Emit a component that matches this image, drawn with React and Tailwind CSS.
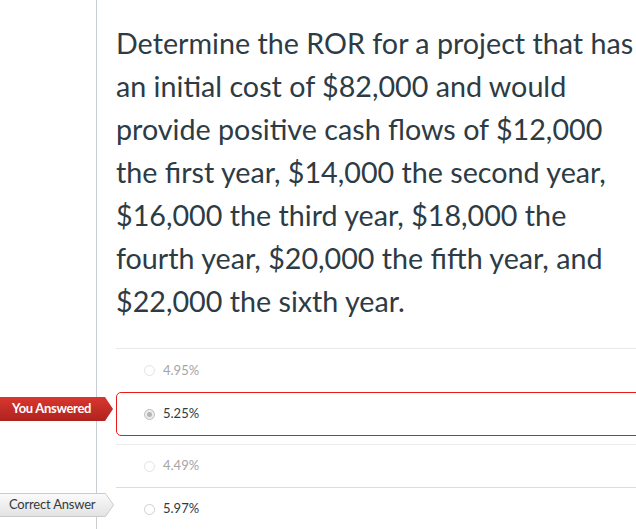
import React from 'react';

const lines = [
  'Determine the ROR for a project that has',
  'an initial cost of $82,000 and would',
  'provide positive cash flows of $12,000',
  'the first year, $14,000 the second year,',
  '$16,000 the third year, $18,000 the',
  'fourth year, $20,000 the fifth year, and',
  '$22,000 the sixth year.',
];

const Radio = ({ checked, faded }) => (
  <span
    className={`flex items-center justify-center w-[11px] h-[11px] rounded-full border shrink-0 ${
      checked ? 'border-[#bdbdbd] bg-[#ececec]' : faded ? 'border-[#e3e3e3] bg-white' : 'border-[#cfcfcf] bg-white'
    }`}
  >
    {checked && <span className="w-[5px] h-[5px] rounded-full bg-[#b5b5b5]" />}
  </span>
);

const Tag = ({ kind }) => {
  const red = kind === 'wrong';
  return (
    <div className="absolute left-[-116px] w-[114px] h-[24px]">
      <svg width="114" height="24" className="absolute inset-0">
        <defs>
          <linearGradient id="gr" x1="0" y1="0" x2="0" y2="1">
            <stop offset="0" stopColor="#d8372f" />
            <stop offset="1" stopColor="#b0221e" />
          </linearGradient>
          <linearGradient id="gg" x1="0" y1="0" x2="0" y2="1">
            <stop offset="0" stopColor="#fbfbfb" />
            <stop offset="1" stopColor="#e2e2e2" />
          </linearGradient>
        </defs>
        {red ? (
          <polygon points="0,0 105,0 113,12 105,24 0,24" fill="url(#gr)" />
        ) : (
          <polygon points="-1,0.5 105.5,0.5 113.5,12 105.5,23.5 -1,23.5" fill="url(#gg)" stroke="#cbcbcb" />
        )}
      </svg>
      <span
        className={`relative flex items-center h-full text-[13px] ${
          red ? 'pl-[12px] font-bold text-white tracking-[-0.3px]' : 'pl-[9px] text-[#333a40] tracking-[-0.2px]'
        }`}
      >
        {red ? 'You Answered' : 'Correct Answer'}
      </span>
    </div>
  );
};

export default function App() {
  return (
    <div className="w-[636px] h-[529px] overflow-hidden bg-white flex font-['Lato',sans-serif]">
      <div className="w-[97px] shrink-0 border-r border-[#c9ced2]" />
      <div className="pl-[19px] pt-[22px] w-[560px] shrink-0">
        <p className="text-[28.7px] leading-[43px] text-[#2d3b45] whitespace-nowrap">
          {lines.map((l, i) => (
            <span key={i} className="block">
              {l}
            </span>
          ))}
        </p>
        <div className="mt-[25px]">
          <div className="relative flex items-center h-[44px] border-t border-[#e9e9e9] pl-[28px] gap-[8px]">
            <Radio faded />
            <span className="text-[13px] text-[#a5a5a5]">4.95%</span>
          </div>
          <div className="relative flex items-center h-[44px] border border-[#e81b1b] rounded-[5px] pl-[27px] gap-[8px]">
            <div className="absolute top-[4px] left-[-1px]">
              <Tag kind="wrong" />
            </div>
            <Radio checked />
            <span className="text-[13px] text-[#2d3b45]">5.25%</span>
          </div>
          <div className="relative flex items-center h-[43px] border-t border-[#ececec] pl-[28px] gap-[8px] mt-[8px]">
            <Radio faded />
            <span className="text-[13px] text-[#a5a5a5]">4.49%</span>
          </div>
          <div className="relative flex items-center h-[43px] border-t border-[#dcdcdc] pl-[28px] gap-[8px]">
            <div className="absolute top-[5px] left-0">
              <Tag kind="correct" />
            </div>
            <Radio />
            <span className="text-[13px] text-[#2d3b45]">5.97%</span>
          </div>
        </div>
      </div>
    </div>
  );
}
